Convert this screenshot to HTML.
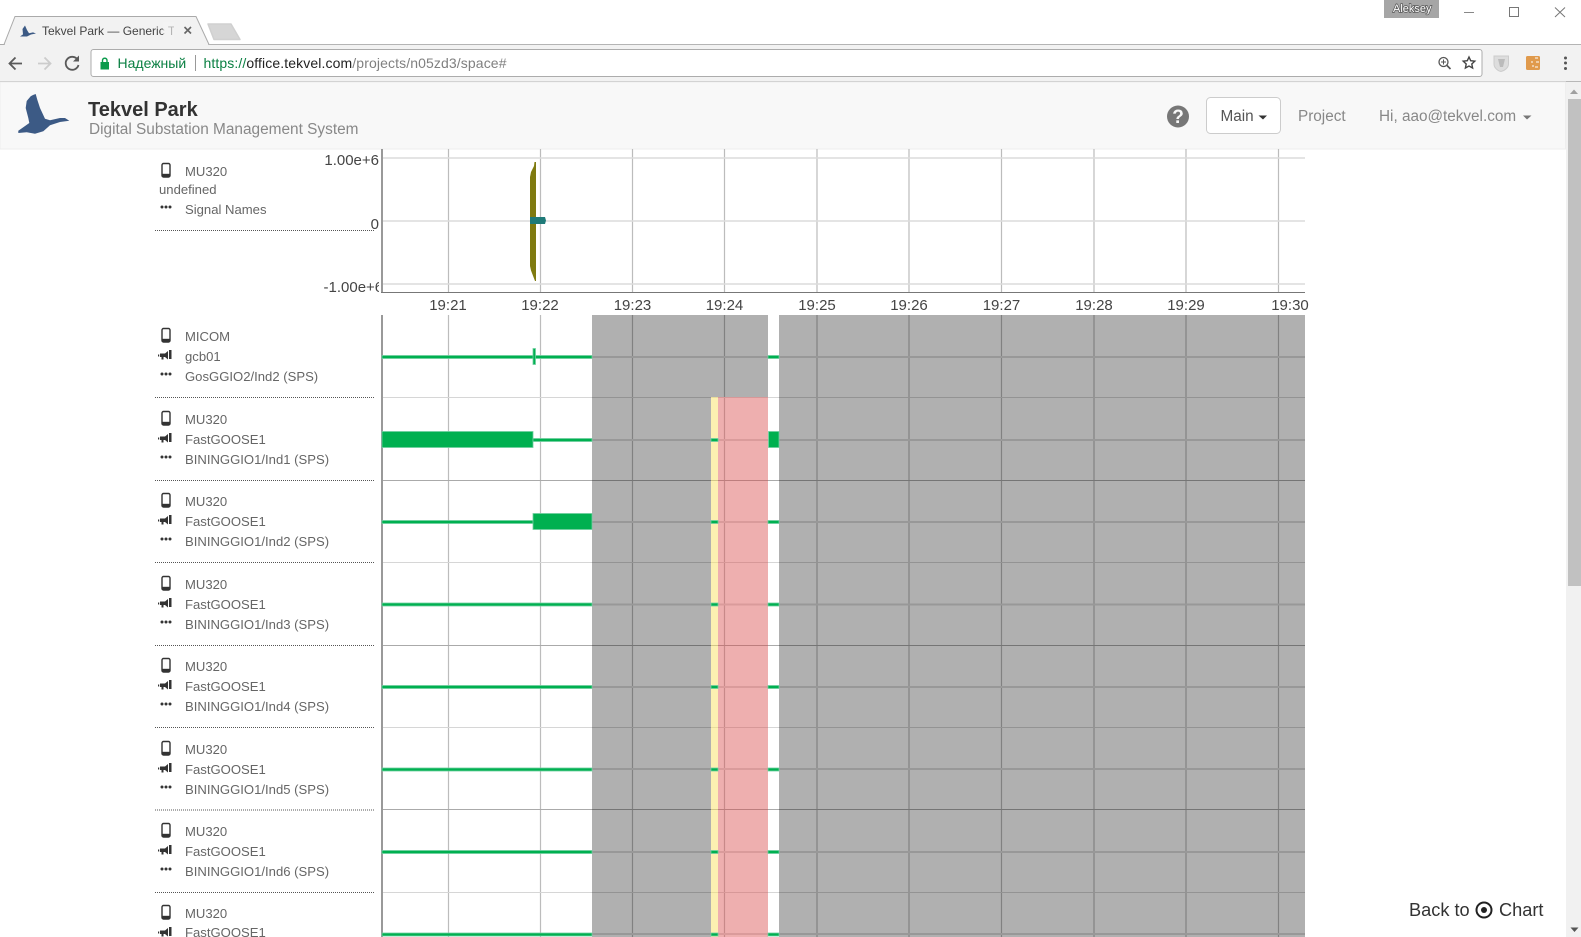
<!DOCTYPE html>
<html><head><meta charset="utf-8"><title>Tekvel Park</title>
<style>
html,body{margin:0;padding:0;width:1581px;height:937px;overflow:hidden;background:#fff;font-family:"Liberation Sans","Noto Sans CJK SC",sans-serif}
svg{position:absolute;left:0;top:0}
text{font-family:"Liberation Sans","Noto Sans CJK SC",sans-serif}
.l{font-size:13.1px;fill:#666}
.t{font-size:15px;fill:#444}
.g{fill:#00b050;stroke:#6fcf9f;stroke-width:.8}
.d{stroke:#555;stroke-width:1;stroke-dasharray:1 1}
.v{stroke:#bcbcbc;stroke-width:1.2}
.h{stroke:#d6d6d6;stroke-width:1}
.h2{stroke:#aaa;stroke-width:1}
.s{stroke:#dcdcdc;stroke-width:2}
</style></head>
<body>
<svg width="1581" height="937" viewBox="0 0 1581 937" xmlns="http://www.w3.org/2000/svg">
<defs>
<g id="phone"><rect x="162" y="-1.500" width="8" height="13.500" rx="1.500" fill="none" stroke="#333" stroke-width="1.400"/><rect x="162" y="8.800" width="8" height="3.200" fill="#333"/></g>
<g id="mega"><path d="M158 -5.500h1.200v2h-1.200zM160 -6.500H165L168 -9V-.5L165 -3H163.500V-.5H161.500V-3H160ZM169 -10h2.500V-1h-2.500z" fill="#333"/></g>
<g id="dots"><circle cx="162" cy="0" r="1.500" fill="#333"/><circle cx="166" cy="0" r="1.500" fill="#333"/><circle cx="170" cy="0" r="1.500" fill="#333"/></g>
<clipPath id="tabclip"><rect x="40" y="20" width="134" height="22"/></clipPath>
</defs>

<!-- tab strip -->
<rect x="0" y="0" width="1581" height="44" fill="#fff"/>
<rect x="0" y="44" width="1581" height="37" fill="#f2f2f2"/>
<line x1="0" y1="44.500" x2="1581" y2="44.500" stroke="#b4b4b4"/>
<path d="M0 44.500H4L15 16.500H196L209 44.500" fill="#f2f2f2" stroke="#aaa"/>
<rect x="5" y="44" width="203" height="2" fill="#f2f2f2"/>
<path d="M208 24H231L240 39.500H214Z" fill="#d6d6d6" stroke="#d0d0d0" stroke-width="1.500" stroke-linejoin="round"/>
<path d="M25 25.500L27 30L29 33.200L33 32.400L36 33.500L31 34.500L27 36.500H20L23 34.400L22.500 29Z" fill="#3c5a85"/>
<text x="42" y="35" font-size="12" fill="#444" clip-path="url(#tabclip)">Tekvel Park — Generic Te</text>
<rect x="163" y="22" width="11" height="18" fill="#f2f2f2" opacity=".65"/>
<path d="M184.500 27L191 33.500M191 27L184.500 33.500" stroke="#666" stroke-width="1.600"/>

<!-- toolbar -->
<line x1="0" y1="81.500" x2="1581" y2="81.500" stroke="#b8b8b8"/>
<path d="M22 63.500H10M15.500 57.500L9.500 63.500L15.500 69.500" fill="none" stroke="#5a5a5a" stroke-width="1.800"/>
<path d="M38 63.500H50M44.500 57.500L50.500 63.500L44.500 69.500" fill="none" stroke="#ccc" stroke-width="1.800"/>
<path d="M77.500 59.500A6.500 6.500 0 1 0 78.500 65" fill="none" stroke="#5a5a5a" stroke-width="1.800"/>
<path d="M79 55.500V61.500H73Z" fill="#5a5a5a"/>
<rect x="91" y="49.500" width="1391" height="27" rx="2.500" fill="#fff" stroke="#acacac"/>
<rect x="100.500" y="62" width="8.500" height="7.500" fill="#0b9b4c"/>
<path d="M102.500 62V60a2.300 2.300 0 0 1 4.500 0V62" fill="none" stroke="#0b9b4c" stroke-width="1.400"/>
<text x="117.500" y="68" font-size="14" fill="#0b8043">Надежный</text>
<line x1="195.500" y1="55" x2="195.500" y2="71" stroke="#999"/>
<text x="203.500" y="68" font-size="14" letter-spacing=".11"><tspan fill="#0b8043">https://</tspan><tspan fill="#222">office.tekvel.com</tspan><tspan fill="#808080">/projects/n05zd3/space#</tspan></text>
<circle cx="1443.500" cy="62" r="4.500" fill="none" stroke="#555" stroke-width="1.300"/>
<path d="M1447 65.500L1450.500 69" stroke="#555" stroke-width="1.600"/>
<path d="M1441 62H1446M1443.500 59.500V64.500" stroke="#555"/>
<path d="M1469 57L1470.700 60.700L1474.800 61.200L1471.800 64L1472.600 68L1469 66L1465.400 68L1466.200 64L1463.200 61.200L1467.300 60.700Z" fill="none" stroke="#444" stroke-width="1.400"/>
<path d="M1494 56H1508.500V64C1508.500 68 1504 71 1501 71.500C1498 71 1494 68 1494 64Z" fill="#ddd" stroke="#ccc"/>
<path d="M1498 59H1505L1503 67H1500Z" fill="#bbb"/>
<rect x="1526" y="56" width="14" height="14" rx="1.500" fill="#e09a4c"/>
<path d="M1535 58H1538M1531 62H1533M1536 62H1539M1535 67H1538M1532 66H1534" stroke="#fff" stroke-width="1.200" opacity=".8"/>
<circle cx="1565.500" cy="58" r="1.500" fill="#555"/><circle cx="1565.500" cy="63" r="1.500" fill="#555"/><circle cx="1565.500" cy="68.500" r="1.500" fill="#555"/>

<!-- window controls -->
<rect x="1384" y="0" width="55" height="18" fill="#a6a6a6"/>
<text x="1393" y="12" font-size="11" fill="#fff" stroke="#555" stroke-width="1.400" style="paint-order:stroke">Aleksey</text>
<line x1="1464" y1="12.500" x2="1474" y2="12.500" stroke="#888"/>
<rect x="1509.500" y="7.500" width="9" height="9" fill="none" stroke="#777"/>
<path d="M1555 7.500L1565 17M1565 7.500L1555 17" stroke="#777" fill="none"/>

<!-- header -->
<rect x="0" y="82" width="1565.500" height="67" fill="#f8f8f8" stroke="#eee"/>
<path d="M35.700 94L33 95L30.700 96.300L26.700 101L25.700 108L28.300 118L29.300 123L23.300 127.300L18.300 130.700V133L26.700 132.300L35 133.700L43.300 131.300L50 125.300L60 122L69.300 120.700L65 118H60L50 120.300L45 118.700L40 108L37.300 99.700Z" fill="#3c5a85"/>
<text x="88" y="116" font-size="20" font-weight="bold" fill="#333">Tekvel Park</text>
<text x="89" y="134" font-size="15.400" fill="#888">Digital Substation Management System</text>
<circle cx="1178" cy="116.500" r="11" fill="#777"/>
<text x="1178" y="123" font-size="19" font-weight="bold" fill="#f8f8f8" text-anchor="middle">?</text>
<rect x="1206.500" y="97.500" width="74" height="36" rx="4" fill="#fff" stroke="#ccc"/>
<text x="1220.500" y="121" font-size="15.300" fill="#555">Main</text>
<path d="M1258.500 115.500H1267L1263 119.500Z" fill="#333"/>
<text x="1298" y="121" font-size="15.300" fill="#888">Project</text>
<text x="1379" y="121" font-size="15.300" fill="#888">Hi, aao@tekvel.com</text>
<path d="M1523 115.500H1531.500L1527 119.500Z" fill="#777"/>

<!-- upper chart -->
<g class="v">
<line x1="448.500" y1="149" x2="448.500" y2="292"/><line x1="540.500" y1="149" x2="540.500" y2="292"/><line x1="632.500" y1="149" x2="632.500" y2="292"/><line x1="724.500" y1="149" x2="724.500" y2="292"/><line x1="817" y1="149" x2="817" y2="292"/><line x1="909" y1="149" x2="909" y2="292"/><line x1="1001.500" y1="149" x2="1001.500" y2="292"/><line x1="1094" y1="149" x2="1094" y2="292"/><line x1="1186" y1="149" x2="1186" y2="292"/><line x1="1278.500" y1="149" x2="1278.500" y2="292"/>
</g>
<g class="s" style="stroke-width:1.500">
<line x1="382" y1="158" x2="1305" y2="158"/><line x1="382" y1="221" x2="1305" y2="221"/><line x1="382" y1="284" x2="1305" y2="284"/>
</g>
<line x1="382" y1="149" x2="382" y2="292" stroke="#999" stroke-width="2"/>
<line x1="381" y1="292.500" x2="1305" y2="292.500" stroke="#777"/>
<path d="M536 162V281H535L531 270.500L530 266V177L531 172L534 166L534.500 162Z" fill="#7f7a10"/>
<path d="M530 217H545L546 220.500L545 224H530Z" fill="#1f7a78"/>
<text x="379" y="165" class="t" text-anchor="end">1.00e+6</text>
<text x="379" y="229" class="t" text-anchor="end">0</text>
<svg x="300" y="270" width="79" height="30"><text x="23.500" y="22" class="t">-1.00e+6</text></svg>
<g class="t" text-anchor="middle">
<text x="448" y="310">19:21</text><text x="540" y="310">19:22</text><text x="632.500" y="310">19:23</text><text x="724.500" y="310">19:24</text><text x="817" y="310">19:25</text><text x="909" y="310">19:26</text><text x="1001.500" y="310">19:27</text><text x="1094" y="310">19:28</text><text x="1186" y="310">19:29</text><text x="1290" y="310">19:30</text>
</g>

<!-- lower chart grid -->
<g class="v">
<line x1="448.500" y1="315" x2="448.500" y2="937"/><line x1="540.500" y1="315" x2="540.500" y2="937"/><line x1="632.500" y1="315" x2="632.500" y2="937"/><line x1="724.500" y1="315" x2="724.500" y2="937"/><line x1="817" y1="315" x2="817" y2="937"/><line x1="909" y1="315" x2="909" y2="937"/><line x1="1001.500" y1="315" x2="1001.500" y2="937"/><line x1="1094" y1="315" x2="1094" y2="937"/><line x1="1186" y1="315" x2="1186" y2="937"/><line x1="1278.500" y1="315" x2="1278.500" y2="937"/>
</g>
<g class="h">
<line x1="382" y1="397.500" x2="1305" y2="397.500"/><line x1="382" y1="562.500" x2="1305" y2="562.500"/><line x1="382" y1="727.500" x2="1305" y2="727.500"/><line x1="382" y1="892.500" x2="1305" y2="892.500"/>
</g>
<g class="h2">
<line x1="382" y1="480.500" x2="1305" y2="480.500"/><line x1="382" y1="645.500" x2="1305" y2="645.500"/><line x1="382" y1="809.500" x2="1305" y2="809.500"/>
</g>
<g class="s">
<line x1="382" y1="357" x2="1305" y2="357"/><line x1="382" y1="440" x2="1305" y2="440"/><line x1="382" y1="522" x2="1305" y2="522"/><line x1="382" y1="604.500" x2="1305" y2="604.500"/><line x1="382" y1="687" x2="1305" y2="687"/><line x1="382" y1="769" x2="1305" y2="769"/><line x1="382" y1="852" x2="1305" y2="852"/><line x1="382" y1="934" x2="1305" y2="934"/>
</g>
<!-- grey / pink overlays -->
<g fill="rgba(0,0,0,.31)">
<rect x="592" y="315" width="176" height="82"/>
<rect x="592" y="397" width="119" height="540"/>
<rect x="779" y="315" width="526" height="622"/>
</g>
<rect x="711" y="397" width="7" height="540" fill="rgba(250,225,100,.5)"/>
<rect x="718" y="397" width="50" height="540" fill="rgba(215,70,70,.43)"/>
<rect x="768" y="315" width="11" height="82" fill="#fff"/>
<line x1="382" y1="315" x2="382" y2="937" stroke="#999" stroke-width="2"/>

<!-- signal traces -->
<rect class="g" x="382" y="355.500" width="210" height="3"/><rect class="g" x="533" y="348.500" width="2.500" height="16"/><rect class="g" x="768" y="355.500" width="11" height="3"/>
<rect class="g" x="382" y="431.500" width="151" height="16"/><rect class="g" x="533" y="438.500" width="59" height="3"/><rect class="g" x="711" y="438.500" width="7" height="3"/><rect class="g" x="768.500" y="431.500" width="10.500" height="16"/>
<rect class="g" x="382" y="520.500" width="151" height="3"/><rect class="g" x="533" y="513.500" width="59" height="16"/><rect class="g" x="711" y="520.500" width="7" height="3"/><rect class="g" x="768" y="520.500" width="11" height="3"/>
<rect class="g" x="382" y="603" width="210" height="3"/><rect class="g" x="711" y="603" width="7" height="3"/><rect class="g" x="768" y="603" width="11" height="3"/>
<rect class="g" x="382" y="685.500" width="210" height="3"/><rect class="g" x="711" y="685.500" width="7" height="3"/><rect class="g" x="768" y="685.500" width="11" height="3"/>
<rect class="g" x="382" y="768" width="210" height="3"/><rect class="g" x="711" y="768" width="7" height="3"/><rect class="g" x="768" y="768" width="11" height="3"/>
<rect class="g" x="382" y="850.500" width="210" height="3"/><rect class="g" x="711" y="850.500" width="7" height="3"/><rect class="g" x="768" y="850.500" width="11" height="3"/>
<rect class="g" x="382" y="933" width="210" height="3"/><rect class="g" x="711" y="933" width="7" height="3"/><rect class="g" x="768" y="933" width="11" height="3"/>

<!-- labels -->
<use href="#phone" y="165"/><text class="l" x="185" y="176">MU320</text>
<text class="l" x="159" y="194">undefined</text>
<use href="#dots" y="207"/><text class="l" x="185" y="214">Signal Names</text>
<line class="d" x1="155" y1="230.500" x2="375" y2="230.500"/>

<use href="#phone" y="330"/><text class="l" x="185" y="341">MICOM</text>
<use href="#mega" y="360"/><text class="l" x="185" y="361">gcb01</text>
<use href="#dots" y="374"/><text class="l" x="185" y="381">GosGGIO2/Ind2 (SPS)</text>
<line class="d" x1="155" y1="397.500" x2="375" y2="397.500"/>

<use href="#phone" y="413"/><text class="l" x="185" y="424">MU320</text>
<use href="#mega" y="443"/><text class="l" x="185" y="444">FastGOOSE1</text>
<use href="#dots" y="457"/><text class="l" x="185" y="464">BININGGIO1/Ind1 (SPS)</text>
<line class="d" x1="155" y1="480.500" x2="375" y2="480.500"/>

<use href="#phone" y="495"/><text class="l" x="185" y="506">MU320</text>
<use href="#mega" y="525"/><text class="l" x="185" y="526">FastGOOSE1</text>
<use href="#dots" y="539"/><text class="l" x="185" y="546">BININGGIO1/Ind2 (SPS)</text>
<line class="d" x1="155" y1="562.500" x2="375" y2="562.500"/>

<use href="#phone" y="578"/><text class="l" x="185" y="589">MU320</text>
<use href="#mega" y="608"/><text class="l" x="185" y="609">FastGOOSE1</text>
<use href="#dots" y="622"/><text class="l" x="185" y="629">BININGGIO1/Ind3 (SPS)</text>
<line class="d" x1="155" y1="645.500" x2="375" y2="645.500"/>

<use href="#phone" y="660"/><text class="l" x="185" y="671">MU320</text>
<use href="#mega" y="690"/><text class="l" x="185" y="691">FastGOOSE1</text>
<use href="#dots" y="704"/><text class="l" x="185" y="711">BININGGIO1/Ind4 (SPS)</text>
<line class="d" x1="155" y1="727.500" x2="375" y2="727.500"/>

<use href="#phone" y="743"/><text class="l" x="185" y="754">MU320</text>
<use href="#mega" y="773"/><text class="l" x="185" y="774">FastGOOSE1</text>
<use href="#dots" y="787"/><text class="l" x="185" y="794">BININGGIO1/Ind5 (SPS)</text>
<line class="d" x1="155" y1="810" x2="375" y2="810"/>

<use href="#phone" y="825"/><text class="l" x="185" y="836">MU320</text>
<use href="#mega" y="855"/><text class="l" x="185" y="856">FastGOOSE1</text>
<use href="#dots" y="869"/><text class="l" x="185" y="876">BININGGIO1/Ind6 (SPS)</text>
<line class="d" x1="155" y1="892.500" x2="375" y2="892.500"/>

<use href="#phone" y="907"/><text class="l" x="185" y="918">MU320</text>
<use href="#mega" y="937"/><text class="l" x="185" y="937">FastGOOSE1</text>

<!-- back to chart -->
<text x="1409" y="916" font-size="18.200" fill="#333">Back to</text>
<circle cx="1484" cy="910" r="7.500" fill="none" stroke="#222" stroke-width="2"/>
<circle cx="1484" cy="910" r="3" fill="#222"/>
<text x="1499" y="916" font-size="18.200" fill="#333">Chart</text>

<!-- scrollbar -->
<rect x="1566" y="82" width="15" height="855" fill="#f1f1f1"/>
<rect x="1568" y="99" width="13" height="487" fill="#c1c1c1"/>
<path d="M1570 94H1578L1574 89.500Z" fill="#a0a0a0"/>
<path d="M1570.500 927.500H1578.500L1574.500 932Z" fill="#555"/>
</svg>
</body></html>
